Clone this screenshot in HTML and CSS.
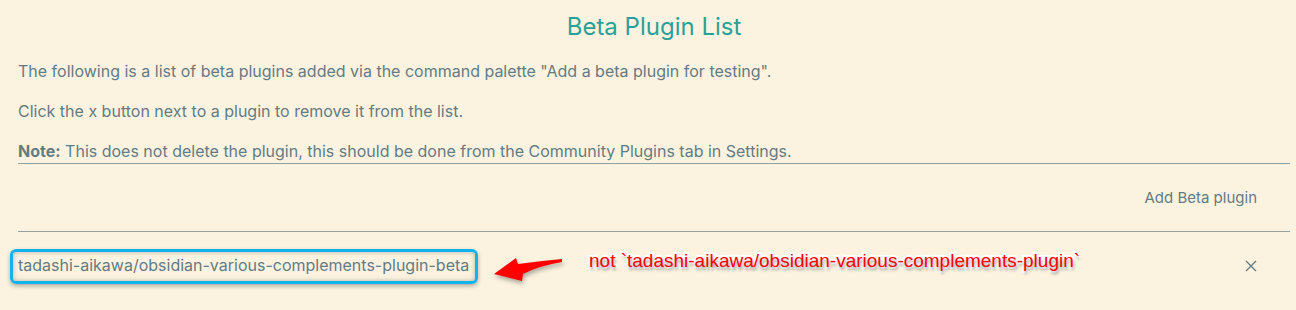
FILE: index.html
```html
<!DOCTYPE html>
<html lang="en">
<head>
    <meta charset="UTF-8">
    <meta name="viewport" content="width=device-width, initial-scale=1.0">
    <title>Beta Plugin List</title>
    <link rel="stylesheet" href="styles.css">
</head>
<body>
    <div class="container">
        <h2 class="title">Beta Plugin List</h2>

        <p>The following is a list of beta plugins added via the command palette "Add a beta plugin for testing".</p>
        <p>Click the x button next to a plugin to remove it from the list.</p>
        <p><strong>Note:</strong> This does not delete the plugin, this should be done from the Community Plugins tab in Settings.</p>

        <div class="setting-item">
            <div class="setting-info"></div>
            <div class="setting-control">
                <button class="button">Add Beta plugin</button>
            </div>
        </div>

        <div class="setting-item plugin-row">
            <div class="setting-info">tadashi-aikawa/obsidian-various-complements-plugin-beta</div>
            <div class="setting-control">
                <span class="remove" aria-label="Remove">
                    <svg width="12" height="12" viewBox="0 0 12 12">
                        <path d="M1 1 L11 11 M11 1 L1 11" stroke="#657b83" stroke-width="1.3" fill="none"/>
                    </svg>
                </span>
            </div>

            <!-- annotation overlay -->
            <div class="mark-box"></div>
            <svg class="mark-arrow" width="76" height="32" viewBox="0 0 76 32">
                <path d="M4 20 L26 4 L28 10 Q50 7 72 5 L72 8 Q48 12 33 20 L32 27 Z" fill="#ff0000"/>
            </svg>
            <div class="mark-note">not `tadashi-aikawa/obsidian-various-complements-plugin`</div>
        </div>
    </div>
</body>
</html>
```

FILE: styles.css
```css
body {
    margin: 0;
    background: #fbf3e0;
    font-family: Inter, "Noto Sans", sans-serif;
    color: #657b83;
}
.container {
    padding: 0 6px 0 18px;
}
.title {
    margin: 12px 0 18px;
    font-size: 24px;
    line-height: 29px;
    font-weight: 400;
    text-align: center;
    color: #2aa198;
}
p {
    margin: 0 0 16px;
    font-size: 16px;
    line-height: 24px;
}
p:last-of-type {
    margin-bottom: 0;
}
strong {
    font-weight: 700;
}
.setting-item {
    display: flex;
    align-items: center;
    border-top: 1px solid #93a1a1;
    padding: 17px 0;
}
.setting-info {
    flex: 1;
    font-size: 16px;
    line-height: 24px;
}
.setting-control {
    display: flex;
    align-items: center;
}
.button {
    height: 33px;
    padding: 0 20px;
    margin-right: 13px;
    border: none;
    background: transparent;
    font-family: Inter, "Noto Sans", sans-serif;
    font-size: 15px;
    color: #657b83;
    cursor: pointer;
}
.plugin-row {
    position: relative;
}
.plugin-row .setting-info {
    line-height: 33px;
}
.remove {
    display: flex;
    padding: 4px;
    margin-right: 29px;
    cursor: pointer;
}
.mark-box {
    position: absolute;
    left: -8px;
    top: 17px;
    width: 462px;
    height: 29px;
    border: 3.5px solid #12b3ec;
    border-radius: 6px;
    box-shadow: 0 2px 4px rgba(0,0,0,0.3), inset 0 0 5px rgba(0,0,0,0.28);
}
.mark-arrow {
    position: absolute;
    left: 472px;
    top: 22px;
    filter: drop-shadow(1px 3px 2px rgba(0,0,0,0.3));
}
.mark-note {
    position: absolute;
    left: 571px;
    top: 18px;
    font-family: "Liberation Sans", Arial, sans-serif;
    font-size: 19px;
    line-height: 22px;
    color: #ff0000;
    white-space: nowrap;
    -webkit-text-stroke: 4px #ffffff;
    paint-order: stroke fill;
    text-shadow: 1px 3px 3px rgba(0,0,0,0.4);
}
```
